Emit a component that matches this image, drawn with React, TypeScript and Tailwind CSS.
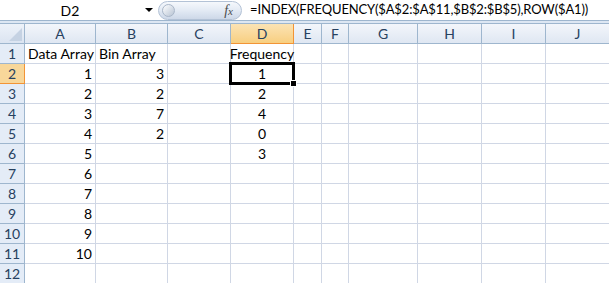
const cols = [
  { name: 'A', w: 71 },
  { name: 'B', w: 72 },
  { name: 'C', w: 63 },
  { name: 'D', w: 63 },
  { name: 'E', w: 28 },
  { name: 'F', w: 27 },
  { name: 'G', w: 69 },
  { name: 'H', w: 64 },
  { name: 'I', w: 64 },
  { name: 'J', w: 64 },
];

type Cell = { v: string; align: 'left' | 'right' | 'center' };

const rows: Record<number, Record<string, Cell>> = {
  1: {
    A: { v: 'Data Array', align: 'left' },
    B: { v: 'Bin Array', align: 'left' },
    D: { v: 'Frequency', align: 'center' },
  },
  2: { A: { v: '1', align: 'right' }, B: { v: '3', align: 'right' }, D: { v: '1', align: 'center' } },
  3: { A: { v: '2', align: 'right' }, B: { v: '2', align: 'right' }, D: { v: '2', align: 'center' } },
  4: { A: { v: '3', align: 'right' }, B: { v: '7', align: 'right' }, D: { v: '4', align: 'center' } },
  5: { A: { v: '4', align: 'right' }, B: { v: '2', align: 'right' }, D: { v: '0', align: 'center' } },
  6: { A: { v: '5', align: 'right' }, D: { v: '3', align: 'center' } },
  7: { A: { v: '6', align: 'right' } },
  8: { A: { v: '7', align: 'right' } },
  9: { A: { v: '8', align: 'right' } },
  10: { A: { v: '9', align: 'right' } },
  11: { A: { v: '10', align: 'right' } },
  12: {},
};

const alignCls = {
  left: 'justify-start pl-[3px]',
  right: 'justify-end pr-[3px]',
  center: 'justify-center',
};

function FormulaBar() {
  return (
    <div className="flex h-[21px] items-center bg-white border-b border-[#9eb6ce]">
      <div className="flex w-[140px] shrink-0 items-center justify-center text-[14px] text-black">D2</div>
      <div className="flex w-[18px] shrink-0 items-center justify-center">
        <div className="h-0 w-0 border-x-[4px] border-t-[4px] border-x-transparent border-t-black" />
      </div>
      <div className="relative flex h-[19px] w-[84px] shrink-0 items-center rounded-full border border-[#b3c2d6] bg-gradient-to-b from-[#f5f8fc] via-[#e3eaf4] to-[#cdd8e8]">
        <div className="ml-[3px] h-[13px] w-[13px] rounded-full border border-[#a9b6c8] bg-gradient-to-br from-white to-[#b8c4d4]" />
        <span className="ml-auto mr-[8px] font-['Liberation_Serif',serif] text-[14px] italic text-[#4b4b4b]">
          f<span className="text-[11px]">x</span>
        </span>
      </div>
      <div className="ml-[8px] whitespace-nowrap font-['Lato',sans-serif] text-[13px] tracking-[-0.15px] text-black">
        =INDEX(FREQUENCY($A$2:$A$11,$B$2:$B$5),ROW($A1))
      </div>
    </div>
  );
}

function HeaderRow() {
  return (
    <div className="flex h-[20px]">
      <div className="relative w-[25px] shrink-0 border-r border-b border-[#9eb6ce] bg-gradient-to-b from-[#edf2f9] to-[#dbe4f1]">
        <svg className="absolute bottom-[2px] right-[2px]" width="13" height="13" viewBox="0 0 13 13">
          <polygon points="13,0 13,13 0,13" fill="#c5d2e3" />
        </svg>
      </div>
      {cols.map((c) => (
        <div
          key={c.name}
          style={{ width: c.w }}
          className={
            c.name === 'D'
              ? 'flex shrink-0 items-center justify-center border-r border-b border-[#f29436] bg-gradient-to-b from-[#fbe3b4] to-[#f8cf80] text-[14px] text-[#27415f]'
              : 'flex shrink-0 items-center justify-center border-r border-b border-[#9eb6ce] bg-gradient-to-b from-[#f3f6fb] to-[#dfe7f2] text-[14px] text-[#27415f]'
          }
        >
          {c.name}
        </div>
      ))}
    </div>
  );
}

function DataRow({ n }: { n: number }) {
  const data = rows[n] || {};
  const selected = n === 2;
  return (
    <div className={selected ? 'relative z-10 flex h-[20px]' : 'flex h-[20px]'}>
      <div
        className={
          selected
            ? 'flex w-[25px] shrink-0 items-center justify-center border-r border-b border-[#f29436] bg-[#f8d79a] text-[14px] text-[#27415f]'
            : 'flex w-[25px] shrink-0 items-center justify-center border-r border-b border-[#9eb6ce] bg-[#e4ecf7] text-[14px] text-[#27415f]'
        }
      >
        {n}
      </div>
      {cols.map((c) => {
        const cell = data[c.name];
        const isSel = selected && c.name === 'D';
        return (
          <div
            key={c.name}
            style={{ width: c.w }}
            className={
              'relative flex shrink-0 items-end border-r border-b border-[#d0d7e5] text-[14px] leading-[18px] text-black ' +
              (cell ? alignCls[cell.align] : '')
            }
          >
            {cell ? <span className="whitespace-nowrap">{cell.v}</span> : null}
            {isSel && (
              <>
                <div className="absolute -left-[2px] -top-[2px] z-10 h-[23px] w-[66px] border-[3px] border-black" />
                <div className="absolute -bottom-[4px] -right-[4px] z-20 h-[7px] w-[7px] border border-white bg-black" />
              </>
            )}
          </div>
        );
      })}
    </div>
  );
}

export default function App() {
  return (
    <div className="h-[283px] w-[609px] overflow-hidden bg-white font-['Lato',sans-serif]">
      <FormulaBar />
      <div className="h-[3px] border-b border-[#9eb6ce] bg-[#dde7f3]" />
      <HeaderRow />
      {Array.from({ length: 12 }, (_, i) => (
        <DataRow key={i + 1} n={i + 1} />
      ))}
    </div>
  );
}
